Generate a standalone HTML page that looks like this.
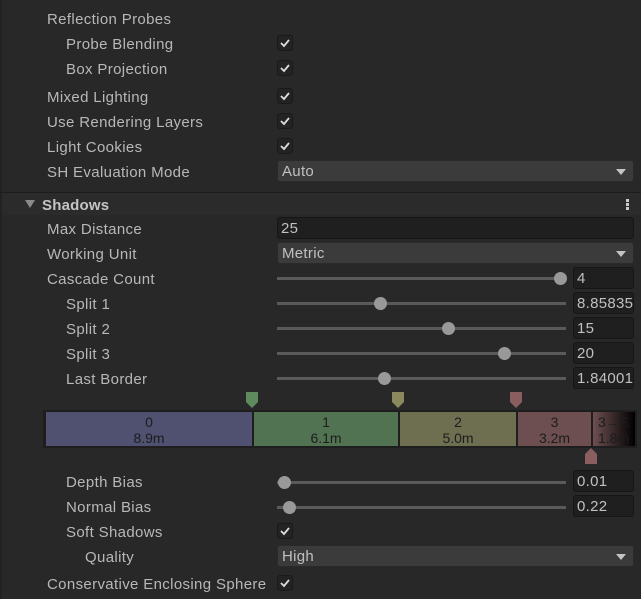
<!DOCTYPE html>
<html><head><meta charset="utf-8"><style>
*{margin:0;padding:0;box-sizing:border-box}
body{width:641px;height:599px;background:#282828;font-family:"Liberation Sans",sans-serif;font-size:15px;color:#b8b8b8;position:relative;overflow:hidden}
.a{position:absolute}
.l{position:absolute;line-height:20px;white-space:nowrap;margin-top:2px;letter-spacing:0.35px}
.cb{position:absolute;left:277px;width:16px;height:16px;background:#232323;border:1px solid #1a1a1a;border-radius:3px}
.cb svg{position:absolute;left:2px;top:2px}
.dd{position:absolute;left:277px;width:357px;height:22px;background:#3b3b3b;border:1px solid #2a2a2a;border-radius:3px;line-height:22px;padding-left:4px;color:#c0c0c0;letter-spacing:0.3px}
.dd:after{content:"";position:absolute;right:7px;top:8px;border-left:5px solid transparent;border-right:5px solid transparent;border-top:6px solid #c4c4c4}
.in{position:absolute;height:22px;background:#1f1f1f;border:1px solid #161616;border-radius:3px;line-height:22px;padding-left:3px;color:#c0c0c0;overflow:hidden;white-space:nowrap;letter-spacing:0.3px}
.tr{position:absolute;left:277px;width:289px;height:3px;background:#5a5a5a}
.kn{position:absolute;width:13px;height:13px;border-radius:50%;background:#999}
.seg{position:absolute;top:412px;height:34px;text-align:center;color:#1c1c1c;font-size:14px;line-height:16px;padding-top:2px;overflow:hidden;white-space:nowrap}
</style></head><body>
<div class="a" style="left:0;top:0;width:2px;height:599px;background:#222"></div>
<div class="l" style="left:47px;top:8px">Reflection Probes</div>
<div class="l" style="left:66px;top:33px">Probe Blending</div>
<div class="l" style="left:66px;top:58px">Box Projection</div>
<div class="l" style="left:47px;top:86px">Mixed Lighting</div>
<div class="l" style="left:47px;top:111px">Use Rendering Layers</div>
<div class="l" style="left:47px;top:136px">Light Cookies</div>
<div class="l" style="left:47px;top:161px">SH Evaluation Mode</div>
<div class="cb" style="top:35px"><svg width="10" height="10"><path d="M1 5l3 3 5-6" stroke="#ddd" stroke-width="1.8" fill="none"/></svg></div>
<div class="cb" style="top:60px"><svg width="10" height="10"><path d="M1 5l3 3 5-6" stroke="#ddd" stroke-width="1.8" fill="none"/></svg></div>
<div class="cb" style="top:88px"><svg width="10" height="10"><path d="M1 5l3 3 5-6" stroke="#ddd" stroke-width="1.8" fill="none"/></svg></div>
<div class="cb" style="top:113px"><svg width="10" height="10"><path d="M1 5l3 3 5-6" stroke="#ddd" stroke-width="1.8" fill="none"/></svg></div>
<div class="cb" style="top:138px"><svg width="10" height="10"><path d="M1 5l3 3 5-6" stroke="#ddd" stroke-width="1.8" fill="none"/></svg></div>
<div class="dd" style="top:160px">Auto</div>
<div class="a" style="left:0;top:192px;width:641px;height:1px;background:#1c1c1c"></div>
<div class="a" style="left:2px;top:193px;width:639px;height:22px;background:#2b2b2b"></div>
<div class="a" style="left:25px;top:200px;border-left:5px solid transparent;border-right:5px solid transparent;border-top:8px solid #8a8a8a"></div>
<div class="l" style="left:42px;top:194px;font-weight:bold;color:#c4c4c4;letter-spacing:0.2px">Shadows</div>
<div class="a" style="left:626px;top:199px;width:3px;height:3px;background:#ccc;box-shadow:0 4px 0 #ccc,0 8px 0 #ccc"></div>
<div class="l" style="left:47px;top:218px">Max Distance</div>
<div class="l" style="left:47px;top:243px">Working Unit</div>
<div class="l" style="left:47px;top:268px">Cascade Count</div>
<div class="l" style="left:66px;top:293px">Split 1</div>
<div class="l" style="left:66px;top:318px">Split 2</div>
<div class="l" style="left:66px;top:343px">Split 3</div>
<div class="l" style="left:66px;top:368px">Last Border</div>
<div class="in" style="left:277px;top:217px;width:357px">25</div>
<div class="dd" style="top:242px">Metric</div>
<div class="tr" style="top:277px"></div><div class="kn" style="left:554px;top:272px"></div><div class="in" style="left:573px;top:267px;width:61px">4</div>
<div class="tr" style="top:302px"></div><div class="kn" style="left:374px;top:297px"></div><div class="in" style="left:573px;top:292px;width:61px">8.85835</div>
<div class="tr" style="top:327px"></div><div class="kn" style="left:442px;top:322px"></div><div class="in" style="left:573px;top:317px;width:61px">15</div>
<div class="tr" style="top:352px"></div><div class="kn" style="left:498px;top:347px"></div><div class="in" style="left:573px;top:342px;width:61px">20</div>
<div class="tr" style="top:377px"></div><div class="kn" style="left:378px;top:372px"></div><div class="in" style="left:573px;top:367px;width:61px">1.84001</div>
<div class="a" style="left:43px;top:410px;width:594px;height:38px;background:#1e1e1e"></div>
<div class="seg" style="left:46px;width:206px;background:#505170">0<br>8.9m</div>
<div class="seg" style="left:254px;width:144px;background:#527352">1<br>6.1m</div>
<div class="seg" style="left:400px;width:116px;background:#6e6f50">2<br>5.0m</div>
<div class="seg" style="left:518px;width:73px;background:#6e4f51">3<br>3.2m</div>
<div class="seg" style="left:593px;width:42px;background:linear-gradient(90deg,#6e4f51,#000);text-align:left;padding-left:5px">3→F.<br>1.8m</div>
<svg class="a" style="left:0;top:0" width="641" height="599">
<path d="M246 392h12v10l-6 6-6-6z" fill="#5e8a5e"/>
<path d="M392 392h12v10l-6 6-6-6z" fill="#8a8a5e"/>
<path d="M510 392h12v10l-6 6-6-6z" fill="#8a5e5e"/>
<path d="M585 464h12v-10l-6-6-6 6z" fill="#8a5e5e"/>
</svg>
<div class="l" style="left:66px;top:471px">Depth Bias</div>
<div class="l" style="left:66px;top:496px">Normal Bias</div>
<div class="l" style="left:66px;top:521px">Soft Shadows</div>
<div class="l" style="left:85px;top:546px">Quality</div>
<div class="l" style="left:47px;top:573px">Conservative Enclosing Sphere</div>
<div class="tr" style="top:481px"></div><div class="kn" style="left:278px;top:476px"></div><div class="in" style="left:573px;top:470px;width:61px">0.01</div>
<div class="tr" style="top:506px"></div><div class="kn" style="left:283px;top:501px"></div><div class="in" style="left:573px;top:495px;width:61px">0.22</div>
<div class="cb" style="top:523px"><svg width="10" height="10"><path d="M1 5l3 3 5-6" stroke="#ddd" stroke-width="1.8" fill="none"/></svg></div>
<div class="dd" style="top:545px">High</div>
<div class="cb" style="top:575px"><svg width="10" height="10"><path d="M1 5l3 3 5-6" stroke="#ddd" stroke-width="1.8" fill="none"/></svg></div>
</body></html>
